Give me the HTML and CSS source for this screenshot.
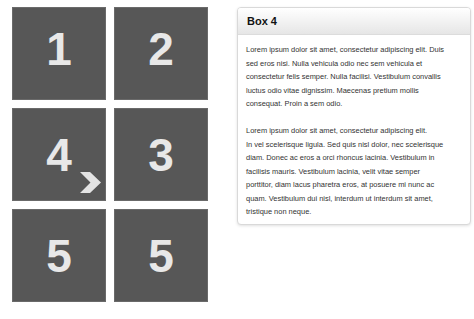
FILE: index.html
```html
<!DOCTYPE html>
<html>
<head>
<meta charset="utf-8">
<link rel="stylesheet" href="styles.css">
</head>
<body>
<div class="page">
  <div class="grid">
    <div class="tile tile--top">1</div>
    <div class="tile tile--top">2</div>
    <div class="tile">4
      <svg class="chevron" viewBox="0 0 21 21" width="21" height="21"><polygon points="0,0 10,0 21,10.5 10,21 0,21 10.5,10.5" fill="#e4e4e4"/></svg>
    </div>
    <div class="tile">3</div>
    <div class="tile">5</div>
    <div class="tile">5</div>
  </div>
  <div class="box">
    <div class="box-header">Box 4</div>
    <div class="box-body">
      <p>Lorem ipsum dolor sit amet, consectetur adipiscing elit. Duis<br>sed eros nisi. Nulla vehicula odio nec sem vehicula et<br>consectetur felis semper. Nulla facilisi. Vestibulum convallis<br>luctus odio vitae dignissim. Maecenas pretium mollis<br>consequat. Proin a sem odio.</p>
      <p>Lorem ipsum dolor sit amet, consectetur adipiscing elit.<br>In vel scelerisque ligula. Sed quis nisl dolor, nec scelerisque<br>diam. Donec ac eros a orci rhoncus lacinia. Vestibulum in<br>facilisis mauris. Vestibulum lacinia, velit vitae semper<br>porttitor, diam lacus pharetra eros, at posuere mi nunc ac<br>quam. Vestibulum dui nisl, interdum ut interdum sit amet,<br>tristique non neque.</p>
    </div>
  </div>
</div>
</body>
</html>
```

FILE: styles.css
```css
html, body {
  margin: 0;
  padding: 0;
  background: #ffffff;
}
.page {
  display: flex;
  align-items: flex-start;
  padding: 7px 0 0 12px;
  font-family: "Liberation Sans", Arial, sans-serif;
}
.grid {
  display: grid;
  grid-template-columns: 94px 94px;
  grid-auto-rows: 93px;
  column-gap: 8px;
  row-gap: 8px;
}
.tile {
  position: relative;
  box-sizing: border-box;
  background: #575757;
  border: 1px solid #6a6a6a;
  color: #e8e8e8;
  font-weight: bold;
  font-size: 46px;
  display: flex;
  align-items: center;
  justify-content: center;
}
.tile--top {
  padding-bottom: 10px;
}
.chevron {
  position: absolute;
  right: 4px;
  bottom: 7px;
}
.box {
  margin-left: 29px;
  width: 234px;
  height: 218px;
  box-sizing: border-box;
  border: 1px solid #d9d9d9;
  border-radius: 4px;
  box-shadow: 0 1px 3px rgba(0,0,0,0.12);
  background: #fff;
  overflow: hidden;
}
.box-header {
  height: 27px;
  box-sizing: border-box;
  padding: 0 0 0 9px;
  display: flex;
  align-items: center;
  font-weight: bold;
  font-size: 11px;
  color: #111;
  background: linear-gradient(#ffffff, #e6e6e6);
  border-bottom: 1px solid #dcdcdc;
}
.box-body {
  padding: 8px 6px 0 8px;
  font-size: 7.45px;
  line-height: 13.5px;
  color: #333;
  white-space: nowrap;
}
.box-body p {
  margin: 0 0 13.5px 0;
}
```
